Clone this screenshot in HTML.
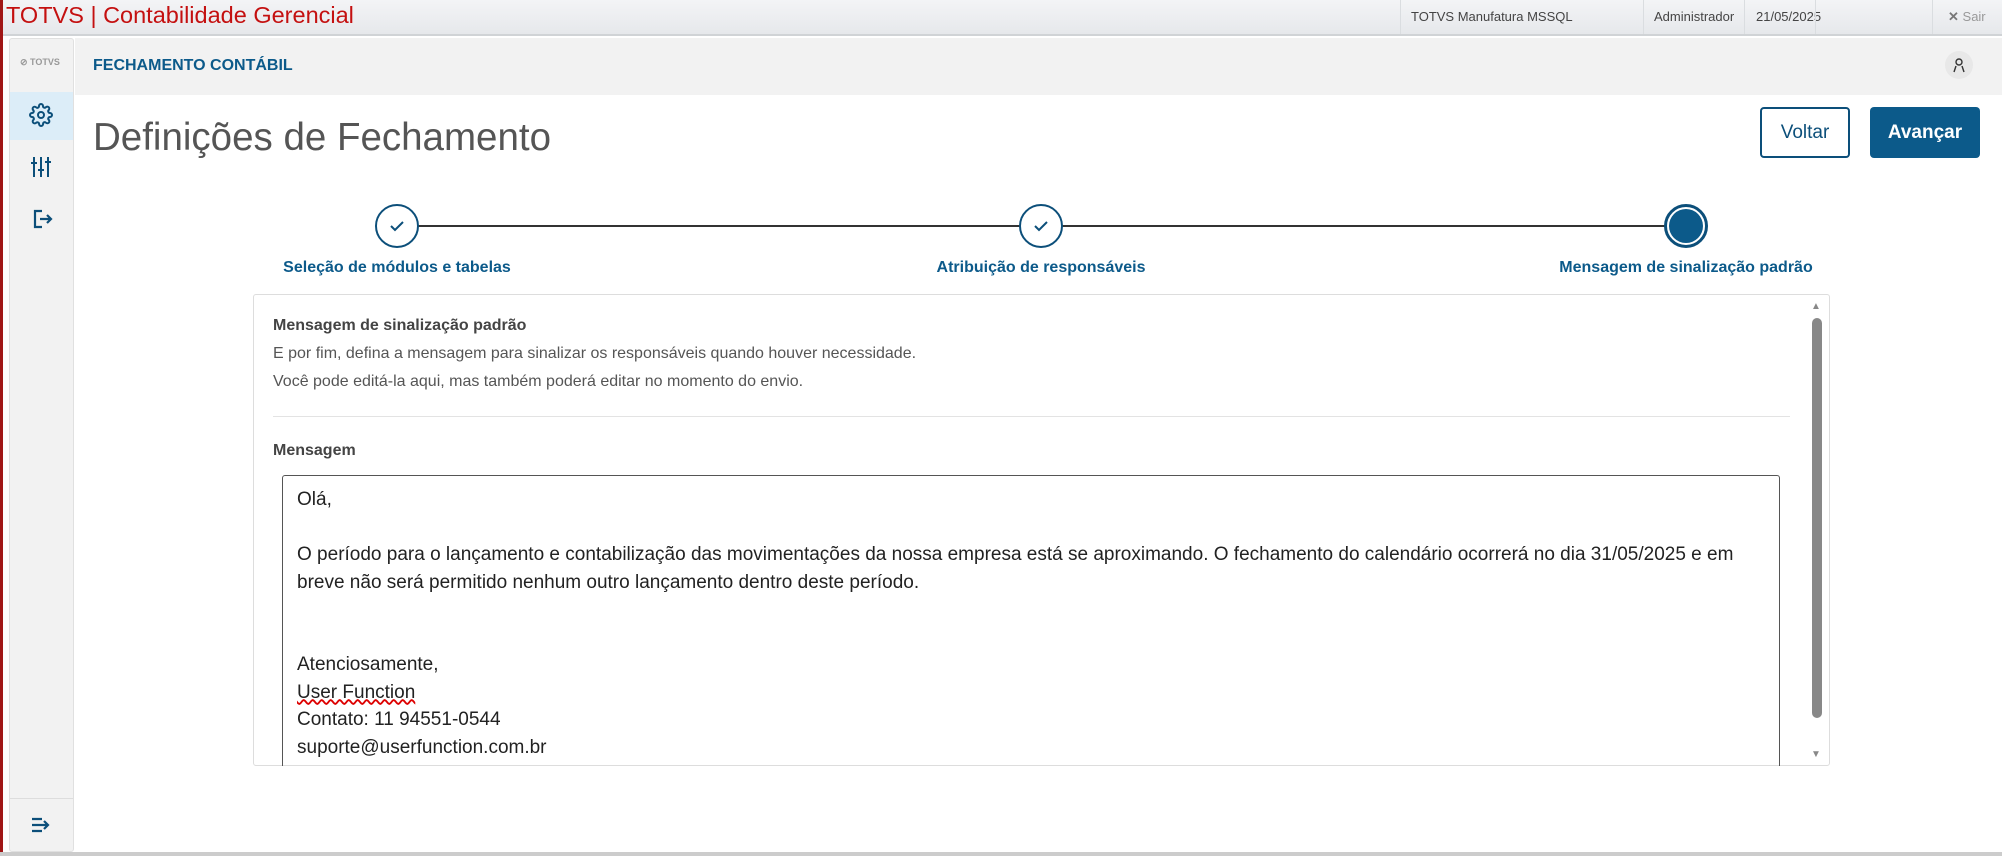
<!DOCTYPE html>
<html><head><meta charset="utf-8"><style>
*{box-sizing:border-box;margin:0;padding:0}
body{width:2002px;height:856px;overflow:hidden;background:#fff;font-family:"Liberation Sans",sans-serif;position:relative}
.abs{position:absolute}
.top{left:0;top:0;width:2002px;height:36px;background:linear-gradient(#f3f4f6,#e6e8eb);border-bottom:2px solid #d0d3d6}
.redl{left:0;top:0;width:3px;height:856px;background:#a01616}
.tt{left:6px;top:2px;font-size:23.5px;color:#c41010}
.ti{top:9px;font-size:13px;color:#444}
.sep{top:0;width:1px;height:34px;background:#dadde0}
.side{left:9px;top:38px;width:65px;height:814px;background:#f2f2f2;border:1px solid #e0e0e0;border-radius:3px}
.hdr{left:75px;top:38px;width:1927px;height:57px;background:#f2f2f2}
.blue{color:#0c5a8a}
.step{width:44px;height:44px;border-radius:50%;border:2.5px solid #0c4f7a;background:#fff;top:204px}
.lbl{top:259px;font-size:16px;font-weight:bold;color:#0c5a8a;white-space:nowrap;transform:translateX(-50%)}
.card{left:253px;top:294px;width:1577px;height:472px;border:1px solid #ddd;border-radius:3px}
.ta{left:282px;top:475px;width:1498px;height:291px;border:1px solid #555;border-bottom:none;border-radius:3px 3px 0 0;font-size:19px;color:#222;padding:10px 14px;line-height:27.5px}
</style></head><body>
<div class="abs top"></div>
<div class="abs redl"></div>
<div class="abs tt">TOTVS | Contabilidade Gerencial</div>
<div class="abs sep" style="left:1400px"></div>
<div class="abs ti" style="left:1411px">TOTVS Manufatura MSSQL</div>
<div class="abs sep" style="left:1643px"></div>
<div class="abs ti" style="left:1654px">Administrador</div>
<div class="abs sep" style="left:1744px"></div>
<div class="abs ti" style="left:1756px">21/05/2025</div>
<div class="abs sep" style="left:1815px"></div>
<div class="abs sep" style="left:1932px"></div>
<div class="abs ti" style="left:1948px;color:#999"><b style="color:#777">✕</b> Sair</div>

<div class="abs side"></div>
<div class="abs" style="left:20px;top:57px;font-size:9px;color:#999;font-weight:bold">⊘ TOTVS</div>
<div class="abs" style="left:10px;top:92px;width:63px;height:48px;background:#dcedf8"></div>
<svg class="abs" style="left:29px;top:103px" width="24" height="24" viewBox="0 0 24 24" fill="none" stroke="#0c4f7a" stroke-width="2"><circle cx="12" cy="12" r="3"/><path d="M19.4 15a1.65 1.65 0 0 0 .33 1.820l.06.06a2 2 0 1 1-2.83 2.830l-.06-.06a1.65 1.65 0 0 0-1.82-.33 1.65 1.65 0 0 0-1 1.51V21a2 2 0 1 1-4 0v-.09A1.65 1.65 0 0 0 9 19.4a1.65 1.65 0 0 0-1.82.33l-.06.06a2 2 0 1 1-2.83-2.83l.06-.06A1.65 1.65 0 0 0 4.68 15a1.65 1.65 0 0 0-1.51-1H3a2 2 0 1 1 0-4h.09A1.65 1.65 0 0 0 4.6 9a1.65 1.65 0 0 0-.33-1.82l-.06-.06a2 2 0 1 1 2.83-2.83l.06.06A1.65 1.65 0 0 0 9 4.68 1.65 1.65 0 0 0 10 3.17V3a2 2 0 1 1 4 0v.09a1.65 1.65 0 0 0 1 1.51 1.65 1.65 0 0 0 1.82-.33l.06-.06a2 2 0 1 1 2.83 2.83l-.06.06A1.65 1.65 0 0 0 19.4 9a1.65 1.65 0 0 0 1.51 1H21a2 2 0 1 1 0 4h-.09a1.65 1.65 0 0 0-1.51 1z"/></svg>
<svg class="abs" style="left:30px;top:155px" width="22" height="24" viewBox="0 0 22 24" fill="none" stroke="#0c4f7a" stroke-width="2"><path d="M4 2v20M11 2v20M18 2v20"/><path d="M1 8h6M8 15h6M15 7h6"/></svg>
<svg class="abs" style="left:30px;top:207px" width="24" height="24" viewBox="0 0 24 24" fill="none" stroke="#0c4f7a" stroke-width="2.2"><path d="M12 4H5v16h7"/><path d="M10 12h11M17 8l4 4-4 4"/></svg>
<div class="abs" style="left:10px;top:798px;width:63px;height:1px;background:#ddd"></div>
<svg class="abs" style="left:30px;top:815px" width="22" height="20" viewBox="0 0 22 20" fill="none" stroke="#0c4f7a" stroke-width="2.2"><path d="M2 4h10M2 10h16M2 16h10M14 6l4 4-4 4"/></svg>

<div class="abs hdr"></div>
<div class="abs blue" style="left:93px;top:57px;font-size:16px;font-weight:bold">FECHAMENTO CONTÁBIL</div>
<div class="abs" style="left:1945px;top:51px;width:28px;height:28px;border-radius:50%;background:#e8e8e8"></div>
<svg class="abs" style="left:1951px;top:57px" width="16" height="16" viewBox="0 0 16 16" fill="none" stroke="#333" stroke-width="1.4"><circle cx="8" cy="5" r="3"/><path d="M3 15l2-6M13 15l-2-6"/></svg>

<div class="abs" style="left:93px;top:116px;font-size:38.5px;font-weight:300;color:#555">Definições de Fechamento</div>
<div class="abs" style="left:1760px;top:107px;width:90px;height:51px;border:2px solid #0c4f7a;border-radius:4px;font-size:19px;color:#0c4f7a;text-align:center;line-height:47px">Voltar</div>
<div class="abs" style="left:1870px;top:107px;width:110px;height:51px;background:#0c5a8a;border-radius:4px;font-size:19px;font-weight:bold;color:#fff;text-align:center;line-height:51px">Avançar</div>

<div class="abs" style="left:397px;top:225px;width:1289px;height:2px;background:#333"></div>
<div class="abs step" style="left:375px"></div>
<div class="abs step" style="left:1019px"></div>
<div class="abs step" style="left:1664px;border-width:3px"></div>
<div class="abs" style="left:1669px;top:209px;width:34px;height:34px;border-radius:50%;background:#0c5a8a"></div>
<svg class="abs" style="left:388px;top:217px" width="18" height="18" viewBox="0 0 18 18" fill="none" stroke="#0c4f7a" stroke-width="2"><path d="M3 9l4 4 8-8"/></svg>
<svg class="abs" style="left:1032px;top:217px" width="18" height="18" viewBox="0 0 18 18" fill="none" stroke="#0c4f7a" stroke-width="2"><path d="M3 9l4 4 8-8"/></svg>
<div class="abs lbl" style="left:397px">Seleção de módulos e tabelas</div>
<div class="abs lbl" style="left:1041px">Atribuição de responsáveis</div>
<div class="abs lbl" style="left:1686px">Mensagem de sinalização padrão</div>

<div class="abs card"></div>
<div class="abs" style="left:273px;top:317px;font-size:16px;font-weight:bold;color:#444">Mensagem de sinalização padrão</div>
<div class="abs" style="left:273px;top:345px;font-size:16px;color:#555">E por fim, defina a mensagem para sinalizar os responsáveis quando houver necessidade.</div>
<div class="abs" style="left:273px;top:373px;font-size:16px;color:#555">Você pode editá-la aqui, mas também poderá editar no momento do envio.</div>
<div class="abs" style="left:273px;top:416px;width:1517px;height:1px;background:#e3e3e3"></div>
<div class="abs" style="left:273px;top:442px;font-size:16px;font-weight:bold;color:#444">Mensagem</div>
<div class="abs ta">Olá,<br><br>O período para o lançamento e contabilização das movimentações da nossa empresa está se aproximando. O fechamento do calendário ocorrerá no dia 31/05/2025 e em<br>breve não será permitido nenhum outro lançamento dentro deste período.<br><br><br>Atenciosamente,<br><span style="text-decoration:underline wavy #d00">User Function</span><br>Contato: 11 94551-0544<br>suporte@userfunction.com.br</div>
<div class="abs" style="left:1811px;top:301px;font-size:10px;color:#888">▲</div>
<div class="abs" style="left:1812px;top:318px;width:10px;height:400px;border-radius:5px;background:#888"></div>
<div class="abs" style="left:1811px;top:749px;font-size:10px;color:#888">▼</div>
<div class="abs" style="left:0;top:852px;width:2002px;height:4px;background:#ccc"></div>
</body></html>
